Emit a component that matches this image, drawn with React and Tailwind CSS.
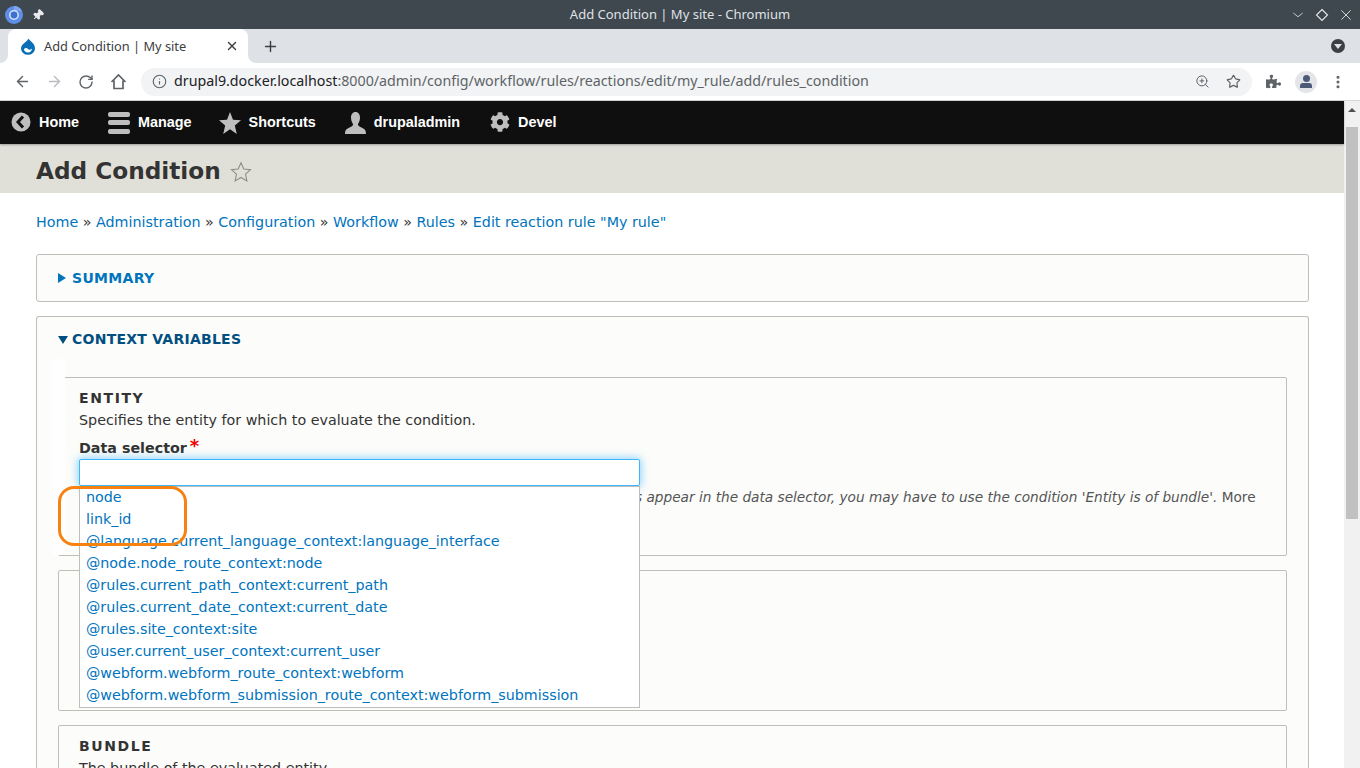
import React from "react";
import { ArrowLeft, ArrowRight, RotateCw, Info, ZoomIn, Star, X, Plus, ChevronDown, Pin, EllipsisVertical } from "lucide-react";
import { FaCog, FaPuzzlePiece } from "react-icons/fa";

const suggestions = [
  "node",
  "link_id",
  "@language.current_language_context:language_interface",
  "@node.node_route_context:node",
  "@rules.current_path_context:current_path",
  "@rules.current_date_context:current_date",
  "@rules.site_context:site",
  "@user.current_user_context:current_user",
  "@webform.webform_route_context:webform",
  "@webform.webform_submission_route_context:webform_submission",
];

const crumbs = ["Home", "Administration", "Configuration", "Workflow", "Rules", 'Edit reaction rule "My rule"'];

function TitleBar() {
  return (
    <div className="h-[29px] bg-[#3f474f] flex items-center pl-[5px] pr-[5px] relative shrink-0">
      <svg width="18" height="18" viewBox="0 0 18 18">
        <circle cx="9" cy="9" r="9" fill="#5e8fe8" />
        <path d="M9 0a9 9 0 0 1 8 5H9z" fill="#7fa6ee" />
        <circle cx="9" cy="9" r="4.2" fill="#3f6fd0" stroke="#cfe0fb" strokeWidth="1.6" />
      </svg>
      <Pin size={12} className="ml-[9px] text-[#e8eaed] rotate-45" fill="#e8eaed" />
      <div className="absolute inset-x-0 text-center text-[13px] text-[#dfe2e5] font-['Noto_Sans',sans-serif]">Add Condition | My site - Chromium</div>
      <div className="ml-auto flex items-center gap-[10px] pr-[2px] text-[#e8eaed]">
        <ChevronDown size={14} strokeWidth={1.2} className="scale-x-125" />
        <svg width="14" height="14" viewBox="0 0 14 14" fill="none" stroke="currentColor" strokeWidth="1.1"><path d="M7 1.5 12.5 7 7 12.5 1.5 7z" /></svg>
        <X size={14} strokeWidth={1.2} className="scale-125" />
      </div>
    </div>
  );
}

function DropIcon() {
  return (
    <svg width="16" height="17" viewBox="0 0 16 17">
      <path d="M8.5 .5C9.5 3 15 5 15 10.5a7 6.300 0 0 1-14 0C1 6 7 4 8.500.5z" fill="#0a6fb4" />
      <path d="M4 11c1.500-1.500 3-1 4 0s2.500 1 4-.5c0 2-1.500 4-4 4s-4-1.500-4-3.500z" fill="#fff" />
    </svg>
  );
}

function TabStrip() {
  return (
    <div className="h-[34px] bg-[#dee1e6] flex items-end pl-2 relative shrink-0">
      <div className="h-[34px] w-[240px] bg-white rounded-t-[8px] flex items-center pl-[12px] pr-[8px] relative">
        <DropIcon />
        <span className="ml-[8px] mt-[1px] text-[12.8px] text-[#3c4043] font-['Noto_Sans',sans-serif]">Add Condition | My site</span>
        <X size={14} strokeWidth={2.4} className="ml-auto mr-[1px] text-[#3c4043]" />
        <svg className="absolute left-[-8px] bottom-0" width="8" height="8" viewBox="0 0 8 8"><path d="M8 0v8H0a8 8 0 0 0 8-8z" fill="#fff" /></svg>
        <svg className="absolute right-[-8px] bottom-0" width="8" height="8" viewBox="0 0 8 8"><path d="M0 0v8h8a8 8 0 0 1-8-8z" fill="#fff" /></svg>
      </div>
      <Plus size={17} strokeWidth={2} className="ml-[14px] mb-[8px] text-[#3c4043]" />
      <div className="absolute right-[15px] top-[10px] w-[14px] h-[14px] rounded-full bg-[#3c4043] flex items-center justify-center">
        <div className="w-0 h-0 border-x-[4px] border-x-transparent border-t-[5px] border-t-[#dee1e6]" />
      </div>
    </div>
  );
}

function NavBar() {
  return (
    <div className="h-[38px] bg-white border-b border-[#d5d6d8] flex items-center shrink-0">
      <ArrowLeft size={17} strokeWidth={2} className="ml-[14px] text-[#5f6368]" />
      <ArrowRight size={17} strokeWidth={2} className="ml-[15px] text-[#b9bbbe]" />
      <RotateCw size={16} strokeWidth={2.1} className="ml-[15px] text-[#5f6368]" />
      <svg className="ml-[16px]" width="17" height="17" viewBox="0 0 17 17" fill="none" stroke="#5f6368" strokeWidth="1.700"><path d="M1.500 9 8.500 2l7 7M4 7.500V15.500h9V7.500" /></svg>
      <div className="ml-[14px] w-[1111px] h-[28px] rounded-full bg-[#f1f3f4] flex items-center pl-[11px] pr-[11px]">
        <Info size={15} strokeWidth={1.8} className="text-[#5f6368]" />
        <span className="ml-[7px] mb-[1px] text-[14.25px] text-[#202124] font-['Noto_Sans',sans-serif] whitespace-nowrap">
          drupal9.docker.localhost<span className="text-[#5f6368]">:8000/admin/config/workflow/rules/reactions/edit/my_rule/add/rules_condition</span>
        </span>
        <ZoomIn size={15} strokeWidth={1.6} className="ml-auto mr-[16px] text-[#5f6368]" />
        <Star size={15} strokeWidth={1.9} className="text-[#5f6368]" />
      </div>
      <FaPuzzlePiece size={15} className="ml-[14px] text-[#5f6368]" />
      <div className="ml-[14px] w-[22px] h-[22px] rounded-full bg-[#e3e5e9] flex flex-col items-center justify-center">
        <div className="w-[7px] h-[7px] rounded-full bg-[#4d5a78]" />
        <div className="w-[12px] h-[5px] mt-[1px] rounded-t-[3px] bg-[#4d5a78]" />
      </div>
      <EllipsisVertical size={16} strokeWidth={2.6} className="ml-[13px] text-[#5f6368]" />
    </div>
  );
}

function ToolbarItem({ icon, label, className }) {
  return (
    <div className={"flex items-center text-white text-[14.4px] font-bold font-['Liberation_Sans',sans-serif] " + className}>
      {icon}
      <span>{label}</span>
    </div>
  );
}

function Toolbar() {
  return (
    <div className="relative h-[43px] bg-[#0f0f0f] flex items-center shrink-0 shadow-[0_1px_2px_rgba(0,0,0,.3)]">
      <ToolbarItem
        className="ml-[11px]"
        label="Home"
        icon={
          <svg className="mr-[8px]" width="20" height="20" viewBox="0 0 20 20">
            <circle cx="10" cy="10" r="9.500" fill="#bebebe" />
            <path d="M12 4.500 7 10l5 5.500" fill="none" stroke="#0f0f0f" strokeWidth="3" />
          </svg>
        }
      />
      <ToolbarItem
        className="ml-[29px]"
        label="Manage"
        icon={
          <div className="mr-[8px] w-[22px] h-[22px] flex flex-col justify-between">
            <div className="h-[5px] rounded-[2px] bg-[#bebebe]" />
            <div className="h-[5px] rounded-[2px] bg-[#bebebe]" />
            <div className="h-[5px] rounded-[2px] bg-[#bebebe]" />
          </div>
        }
      />
      <ToolbarItem
        className="ml-[27px]"
        label="Shortcuts"
        icon={
          <svg className="mr-[8px]" width="22" height="22" viewBox="0 0 22 22">
            <path d="M11 0l3 7.700 8 .6-6.200 5.100L17.800 22 11 17.300 4.200 22l2-8.600L0 8.300l8-.6z" fill="#bebebe" />
          </svg>
        }
      />
      <ToolbarItem
        className="ml-[29px]"
        label="drupaladmin"
        icon={
          <svg className="mr-[8px]" width="21" height="22" viewBox="0 0 21 22">
            <path d="M10.500 0c3 0 4.500 2.500 4.500 5.500 0 3-1 5-2 6.500-.5 1.500 1 2.300 3.500 3.500 2.500 1.200 4.500 2 4.500 6.500H0c0-4.500 2-5.300 4.500-6.500S8.500 13.500 8 12C7 10.500 6 8.500 6 5.500 6 2.500 7.500 0 10.500 0z" fill="#bebebe" />
          </svg>
        }
      />
      <ToolbarItem
        className="ml-[30px]"
        label="Devel"
        icon={<FaCog size={20} className="mr-[8px] text-[#bebebe]" />}
      />
    </div>
  );
}

function Fieldset({ title, desc, className, children }) {
  return (
    <div className={"border border-[#bebfb9] rounded-[2px] px-[20px] " + className}>
      {title && <div className="mt-[12px] h-[17px] leading-[17px] text-[14px] font-bold tracking-[1.6px] text-[#333]">{title}</div>}
      {desc && <div className="mt-[2px] text-[14.29px] leading-[22px] text-[#333]">{desc}</div>}
      {children}
    </div>
  );
}

export default function App() {
  return (
    <div className="relative w-[1360px] h-[768px] overflow-hidden flex flex-col bg-white font-['DejaVu_Sans',sans-serif]">
      <TitleBar />
      <TabStrip />
      <NavBar />
      <div className="flex flex-1 min-h-0">
        <div className="flex-1 min-w-0 flex flex-col">
          <Toolbar />
          <div className="h-[49px] bg-[#e0e0d8] flex items-center pl-[36px] pt-[6px] shrink-0">
            <h1 className="text-[23.2px] font-bold text-[#333]">Add Condition</h1>
            <svg className="ml-[9px]" width="22" height="22" viewBox="0 0 22 22" fill="none" stroke="#8d8d7f" strokeWidth="1.100"><path d="M11 1.800l2.800 6.200 6.700.7-5 4.500 1.400 6.700-5.900-3.400-5.900 3.400 1.400-6.700-5-4.500 6.700-.7z" /></svg>
          </div>
          <div className="mt-[18px] pl-[36px] text-[14.29px] leading-[22px] text-[#333] h-[22px] whitespace-nowrap">
            {crumbs.map((c, i) => (
              <span key={c}>
                {i > 0 && " » "}
                <a className="text-[#0074bd]">{c}</a>
              </span>
            ))}
          </div>
          <div className="ml-[36px] mr-[35px] mt-[21px] h-[48px] border border-[#bebfb9] rounded-[3px] bg-[#fcfcfa] flex items-center pl-[21px] shrink-0">
            <div className="w-0 h-0 border-y-[5px] border-y-transparent border-l-[8px] border-l-[#0074bd]" />
            <span className="ml-[6px] text-[14px] font-bold tracking-[.3px] text-[#0074bd]">SUMMARY</span>
          </div>
          <div className="relative ml-[36px] mr-[35px] mt-[14px] flex-1 border border-[#bebfb9] border-b-0 rounded-t-[3px] bg-[#fcfcfa] px-[21px]">
            <div className="mt-[14px] h-[17px] flex items-center">
              <div className="w-0 h-0 border-x-[5px] border-x-transparent border-t-[8px] border-t-[#004f80]" />
              <span className="ml-[4px] text-[14px] font-bold tracking-[.25px] text-[#004f80]">CONTEXT VARIABLES</span>
            </div>
            <div className="absolute left-[15px] top-[42px] w-[13px] h-[196px] bg-[#fefefe]" />
            <Fieldset title="ENTITY" desc="Specifies the entity for which to evaluate the condition." className="mt-[29px] h-[179px]">
              <div className="mt-[6px] h-[22px] text-[14.29px] leading-[22px] font-bold text-[#333] flex">
                Data selector<span className="ml-[3px] text-[18px] leading-[18px] text-[#e00]">*</span>
              </div>
              <div className="relative">
                <input className="block w-[561px] h-[27px] bg-white border border-[#40b6ff] rounded-[2px] shadow-[0_0_8px_1px_rgba(64,182,255,.6)] outline-none" readOnly />
                <div className="absolute z-10 left-0 top-[27px] w-[561px] h-[222px] bg-white border border-[#bebfb9]">
                  {suggestions.map((s) => (
                    <div key={s} className="h-[22px] leading-[21px] pl-[6px] text-[14.29px] text-[#0074bd] whitespace-nowrap">{s}</div>
                  ))}
                </div>
              </div>
              <div className="text-[13.66px] leading-[22px] text-[#555] h-[44px] overflow-hidden">
                <span className="tracking-[-.115px]">The data selector helps you drill down into the available data. </span><em>To make entity fields appear in the data selector, you may have to use the condition 'Entity is of bundle'.</em> More useful tips about data selection is available in the online documentation.
              </div>
            </Fieldset>
            <Fieldset className="mt-[14px] h-[141px]" />
            <Fieldset title="BUNDLE" desc="The bundle of the evaluated entity." className="mt-[14px] h-[80px] rounded-b-none" />
          </div>
        </div>
        <div className="w-4 bg-[#f1f1f1] flex flex-col items-center shrink-0">
          <div className="mt-[7px] w-0 h-0 border-x-[4px] border-x-transparent border-b-[4px] border-b-[#505050]" />
          <div className="mt-[15px] w-[12px] h-[392px] bg-[#c1c1c1]" />
        </div>
      </div>
      <div className="absolute z-20 left-[58px] top-[486px] w-[129px] h-[60px] border-[3px] border-[#f7820f] rounded-[16px]" />
    </div>
  );
}
